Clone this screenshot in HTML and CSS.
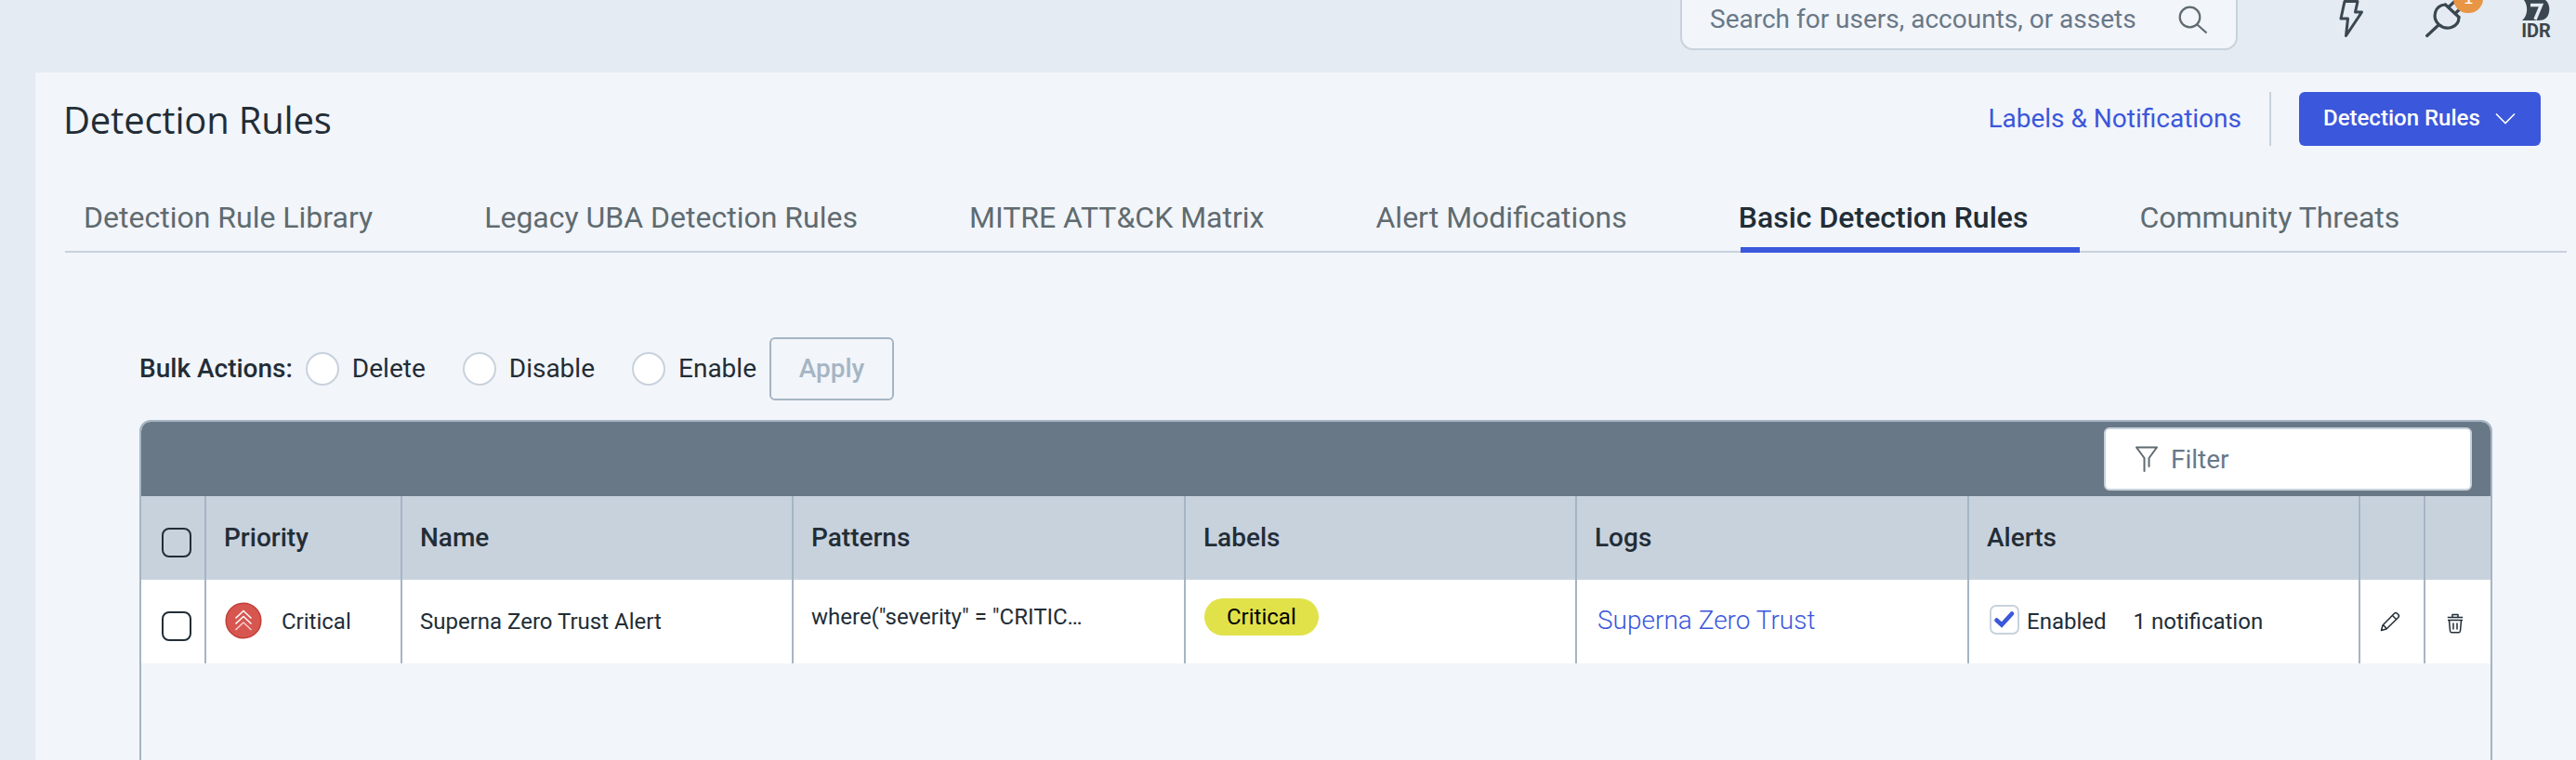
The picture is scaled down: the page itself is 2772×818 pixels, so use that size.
FILE: index.html
```html
<!DOCTYPE html>
<html lang="en">
<head>
    <meta charset="UTF-8">
    <meta name="viewport" content="width=device-width, initial-scale=1.0">
    <title>Detection Rules</title>
    <link rel="stylesheet" href="styles.css">
</head>
<body>
    <header class="topbar">
        <div class="search">
            <span class="search-text">Search for users, accounts, or assets</span>
            <svg class="search-icon" width="32" height="32" viewBox="0 0 32 32" fill="none" stroke="#5f6b70" stroke-width="2.2">
                <circle cx="12.5" cy="12.5" r="10.8"/>
                <path d="M20.2 20.2L30.5 29.5"/>
            </svg>
        </div>
        <svg class="bolt" width="26" height="42" viewBox="0 0 26 42" fill="none" stroke="#3a4650" stroke-width="3" stroke-linejoin="round">
            <path d="M6 1.500H20L17.500 13H24.500L7.500 38.500L9.500 20H2Z"/>
        </svg>
        <div class="plug">
            <svg width="44" height="42" viewBox="0 0 44 42" fill="none" stroke="#3a4650" stroke-width="3.2" stroke-linecap="round">
                <path d="M36 18.500C36 29 23 34 14.500 26.500C6.500 19 10 5.500 21.500 5"/>
                <path d="M21.500 5L36 18.500"/>
                <path d="M14 27L1.700 38.500M25 7.500L34 -1M32 14.500L41 6"/>
            </svg>
            <span class="badge">1</span>
        </div>
        <div class="product">
            <svg width="30" height="22" viewBox="0 0 30 22">
                <path d="M2 0H25C29 3 30 9 29 13C28 19 24 22 18 22H0C6 17 7 7 2 0Z" fill="#3a4650"/>
                <path d="M9 5.500H20.500L14 21" fill="none" stroke="#e4ebf2" stroke-width="3.500"/>
            </svg>
            <span>IDR</span>
        </div>
    </header>
    <main class="panel">
        <div class="title-row">
            <h1>Detection Rules</h1>
            <div class="title-actions">
                <a href="#" class="labels-link">Labels &amp; Notifications</a>
                <button class="primary">
                    <span>Detection Rules</span>
                    <svg width="22" height="14" viewBox="0 0 22 14" fill="none" stroke="#fff" stroke-width="1.6">
                        <path d="M1 1.500L11 11.500L21 1.500"/>
                    </svg>
                </button>
            </div>
        </div>
        <nav class="tabs">
            <a href="#">Detection Rule Library</a>
            <a href="#">Legacy UBA Detection Rules</a>
            <a href="#">MITRE ATT&amp;CK Matrix</a>
            <a href="#">Alert Modifications</a>
            <a href="#" class="active">Basic Detection Rules</a>
            <a href="#">Community Threats</a>
        </nav>
        <section class="content">
            <div class="bulk">
                <strong>Bulk Actions:</strong>
                <label><i class="radio"></i><span>Delete</span></label>
                <label><i class="radio"></i><span>Disable</span></label>
                <label><i class="radio"></i><span>Enable</span></label>
                <button class="apply">Apply</button>
            </div>
            <div class="table">
                <div class="toolbar">
                    <div class="filter">
                        <svg width="26" height="30" viewBox="0 0 26 30" fill="none" stroke="#5f6b70" stroke-width="2" stroke-linejoin="round" stroke-linecap="round">
                            <path d="M10.500 28V14L2 2.500H24L15.500 14V23"/>
                        </svg>
                        <span>Filter</span>
                    </div>
                </div>
                <div class="row head">
                    <div class="cell check"><i class="box"></i></div>
                    <div class="cell">Priority</div>
                    <div class="cell">Name</div>
                    <div class="cell">Patterns</div>
                    <div class="cell">Labels</div>
                    <div class="cell">Logs</div>
                    <div class="cell">Alerts</div>
                    <div class="cell"></div>
                    <div class="cell"></div>
                </div>
                <div class="row">
                    <div class="cell check"><i class="box"></i></div>
                    <div class="cell">
                        <svg class="priority" width="40" height="40" viewBox="0 0 40 40" fill="none" stroke="#fff" stroke-width="1.500">
                            <circle cx="20" cy="20" r="18.800" fill="#d75650" stroke="#c2403a"/>
                            <path d="M11.500 17.500L20 9.500L28.500 17.500M11.500 23.500L20 15.500L28.500 23.500"/>
                            <path d="M11.500 30L20 22L28.500 30" opacity=".7"/>
                        </svg>
                        Critical
                    </div>
                    <div class="cell">Superna Zero Trust Alert</div>
                    <div class="cell pattern">where("severity" = "CRITIC…</div>
                    <div class="cell label"><span class="pill">Critical</span></div>
                    <div class="cell"><a href="#" class="log-link">Superna Zero Trust</a></div>
                    <div class="cell alerts">
                        <svg class="enabled" width="32" height="32" viewBox="0 0 32 32" fill="none">
                            <rect x="1" y="1" width="30" height="30" rx="6" stroke="#c8d2dd" stroke-width="2"/>
                            <path d="M7.500 16.500L13 21.500L24 9.500" stroke="#3b57db" stroke-width="4.600" stroke-linecap="round"/>
                        </svg>
                        <span>Enabled</span>
                        <span class="count">1 notification</span>
                    </div>
                    <div class="cell action">
                        <svg width="22" height="22" viewBox="0 0 22 22" fill="none" stroke="#222d36" stroke-width="1.500" stroke-linejoin="round">
                            <path d="M1.500 20.500L3 15L15.500 2.200Q17 0.800 18.500 2.200L19.800 3.500Q21.200 5 19.800 6.500L7 19Z"/>
                            <path d="M13.500 4.500L17.500 8.500M3 15Q5.500 15.500 7 19"/>
                        </svg>
                    </div>
                    <div class="cell action trash">
                        <svg width="18" height="22" viewBox="0 0 18 22" fill="none" stroke="#222d36" stroke-width="1.500" stroke-linejoin="round">
                            <path d="M0.800 4.500H17.200M6 4.500V1.500H12V4.500M1 7.500H17M2.500 7.500L3.500 19Q3.700 20.800 5 20.800H13Q14.300 20.800 14.500 19L15.500 7.500"/>
                            <path d="M7 10.500V17.500M11 10.500V17.500"/>
                        </svg>
                    </div>
                </div>
            </div>
        </section>
    </main>
</body>
</html>
```

FILE: styles.css
```css
* {
    box-sizing: border-box;
}
body {
    margin: 0;
    height: 818px;
    overflow: hidden;
    background: #e4ebf2;
    color: #222d36;
    font-family: Roboto, sans-serif;
    font-size: 28px;
    display: flex;
    flex-direction: column;
}
a {
    color: #3b57db;
    text-decoration: none;
}
svg {
    display: block;
    flex: none;
    overflow: visible;
}
button {
    font-family: inherit;
    margin: 0;
}
.topbar {
    height: 78px;
    flex: none;
    display: flex;
    align-items: flex-start;
    padding-left: 1808px;
}
.search {
    width: 600px;
    height: 54px;
    display: flex;
    justify-content: space-between;
    border: 2px solid #c8d2dd;
    border-top: 0;
    border-radius: 0 0 14px 14px;
    background: #f2f5fa;
    color: #697887;
    padding: 0 30px;
}
.search-text {
    line-height: 42px;
}
.search-icon {
    margin-top: 6px;
}
.bolt {
    margin: 0 0 0 109px;
}
.plug {
    position: relative;
    margin-left: 67px;
}
.badge {
    position: absolute;
    left: 30px;
    top: -17px;
    width: 32px;
    height: 31px;
    border-radius: 16px;
    background: #e89545;
    color: #fff;
    font-family: Lato, sans-serif;
    font-size: 20px;
    line-height: 26px;
    text-align: center;
}
.product {
    margin-left: 55px;
    width: 40px;
    display: flex;
    flex-direction: column;
    align-items: center;
    font-size: 20px;
    font-weight: 700;
    line-height: 23px;
    color: #3a4650;
}
.panel {
    flex: 1;
    margin-left: 38px;
    background: #f2f5fa;
}
.title-row {
    height: 100px;
    display: flex;
    justify-content: space-between;
    align-items: flex-start;
    padding: 21px 38px 0 30px;
}
h1 {
    margin: 0;
    font-family: "Open Sans", sans-serif;
    font-size: 40px;
    font-weight: 400;
    line-height: 60px;
    letter-spacing: -0.2px;
}
.title-actions {
    display: flex;
    height: 58px;
    line-height: 57px;
}
.labels-link {
    padding-right: 30px;
    border-right: 2px solid #c8d2dd;
    margin-right: 30px;
}
.primary {
    width: 260px;
    padding: 0 27px 0 26px;
    border: 0;
    border-radius: 6px;
    background: #3b57db;
    color: #fff;
    font-size: 24px;
    font-weight: 500;
    display: flex;
    align-items: center;
    justify-content: space-between;
}
.primary span {
    margin-top: -2px;
}
.tabs {
    height: 94px;
    margin: 0 10px 0 32px;
    padding-left: 20px;
    border-bottom: 2px solid #c8d2dd;
    display: flex;
    gap: 120px;
    font-size: 32px;
    line-height: 112px;
}
.tabs a {
    color: #5f6b70;
    white-space: nowrap;
}
.tabs .active {
    position: relative;
    color: #222d36;
    font-weight: 500;
}
.tabs .active::after {
    content: "";
    position: absolute;
    left: 2px;
    right: -56px;
    bottom: -2px;
    height: 6px;
    background: #3b57db;
}
.content {
    padding: 91px 0 0 112px;
}
.bulk {
    height: 68px;
    display: flex;
    align-items: center;
}
.bulk strong {
    font-weight: 500;
    margin: -2px 14px 0 0;
}
.bulk label {
    display: flex;
    align-items: center;
    margin-right: 40px;
}
.bulk label span {
    margin-top: -2px;
}
.bulk label:nth-of-type(3) {
    margin-right: 14px;
}
.radio {
    width: 36px;
    height: 36px;
    margin-right: 14px;
    border: 2px solid #c8d2dd;
    border-radius: 50%;
    background: #fff;
}
.apply {
    width: 134px;
    height: 68px;
    border: 2px solid #a5b5c4;
    border-radius: 6px;
    background: none;
    color: #a5b5c4;
    font-size: 28px;
    font-weight: 500;
    padding: 0 0 2px;
}
.table {
    width: 2532px;
    height: 400px;
    margin-top: 21px;
    border: 2px solid #a5b5c4;
    border-radius: 12px 12px 0 0;
}
.toolbar {
    height: 80px;
    background: #697887;
    border-radius: 10px 10px 0 0;
    display: flex;
    justify-content: flex-end;
    align-items: center;
    padding-right: 20px;
}
.filter {
    width: 396px;
    height: 68px;
    border: 2px solid #c8d2dd;
    border-radius: 6px;
    background: #fff;
    color: #697887;
    display: flex;
    align-items: center;
    gap: 13px;
    padding-left: 31px;
}
.row {
    height: 90px;
    display: grid;
    grid-template-columns: 70px 211px 421px 422px 421px 422px 421px 70px 70px;
    background: #fff;
    font-size: 24px;
}
.head {
    background: #c8d2dd;
    font-size: 28px;
    font-weight: 500;
}
.cell {
    display: flex;
    align-items: center;
    padding-left: 19px;
    border-right: 2px solid #a5b5c4;
    white-space: nowrap;
}
.head .cell {
    padding-bottom: 2px;
}
.cell:last-child {
    border-right: 0;
}
.row .check {
    padding: 10px 0 0 22px;
}
.box {
    width: 32px;
    height: 32px;
    border: 2px solid #222d36;
    border-radius: 8px;
}
.priority {
    margin: -2px 21px 0 1px;
}
.pattern,
.label {
    padding-bottom: 10px;
}
.pill {
    height: 40px;
    margin-left: 1px;
    padding: 0 24px;
    border-radius: 20px;
    background: #e1e24a;
    color: #000;
    line-height: 40px;
}
.log-link {
    margin: -3px 0 0 3px;
    font-size: 28px;
    font-weight: 300;
}
.enabled {
    margin: -4px 8px 0 3px;
}
.count {
    margin-left: 29px;
}
.action svg {
    margin-left: 2px;
}
.trash svg {
    margin: 3px 0 0 4px;
}
```
